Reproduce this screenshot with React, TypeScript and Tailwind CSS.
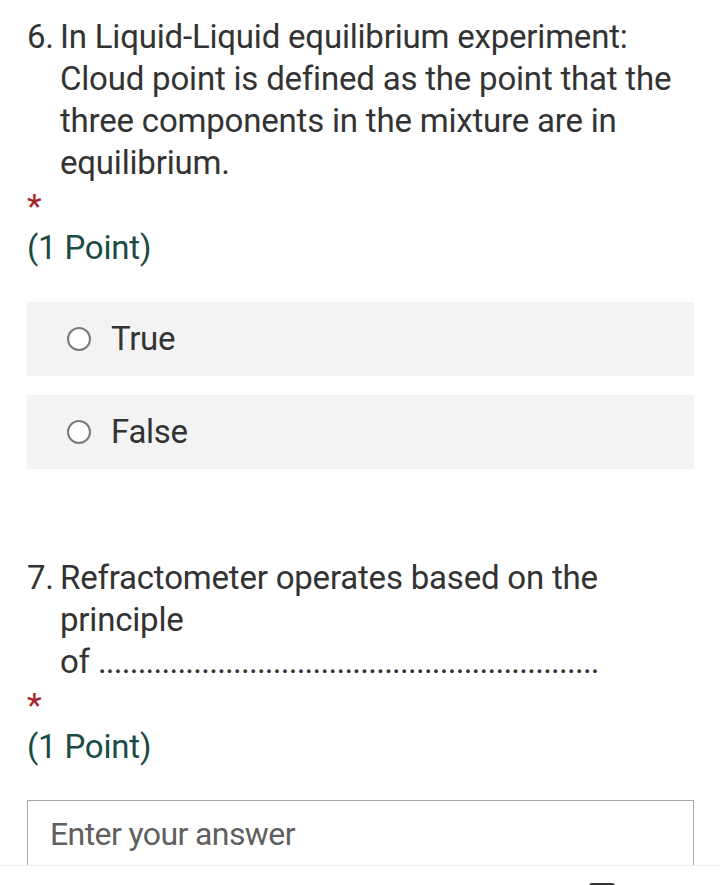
import React from "react";

function Radio() {
  return <span className="inline-block w-[24px] h-[24px] rounded-full border-[2px] border-[#7a7a7a] bg-white shrink-0" />;
}

function Option({ label }: { label: string }) {
  return (
    <div className="h-[74px] bg-[#f3f3f3] flex items-center pl-[40px] gap-[20px]">
      <Radio />
      <span className="text-[33px] leading-[42px] text-[#333333] tracking-[-0.3px]">{label}</span>
    </div>
  );
}

function Star() {
  return <div className="text-[#a4262c] text-[34px] leading-[32px] mt-[6px] h-[32px] -mb-[4px]">*</div>;
}

export default function App() {
  const dots = "...............................................................";
  return (
    <div className="w-[720px] h-[885px] bg-white overflow-hidden relative text-[#333333]" style={{ fontFamily: "Roboto, sans-serif" }}>
      <div className="pl-[27px] pr-[26px] tracking-[-0.2px]">
        <div className="pt-[16px] flex text-[33px] leading-[42px]">
          <span className="w-[33px] shrink-0">6.</span>
          <div className="whitespace-nowrap">
            <div>In Liquid-Liquid equilibrium experiment:</div>
            <div>Cloud point is defined as the point that the</div>
            <div>three components in the mixture are in</div>
            <div>equilibrium.</div>
          </div>
        </div>
        <Star />
        <div className="text-[#1a4b46] text-[33px] leading-[42px] mt-[9px]">(1 Point)</div>
        <div className="mt-[33px] flex flex-col gap-[19px]">
          <Option label="True" />
          <Option label="False" />
        </div>
        <div className="pt-[88px] flex text-[33px] leading-[42px]">
          <span className="w-[33px] shrink-0">7.</span>
          <div className="whitespace-nowrap">
            <div>Refractometer operates based on the</div>
            <div>principle</div>
            <div>
              of <span className="tracking-[-0.75px]">{dots}</span>
            </div>
          </div>
        </div>
        <Star />
        <div className="text-[#1a4b46] text-[33px] leading-[42px] mt-[9px]">(1 Point)</div>
        <div className="mt-[32px] h-[80px] border border-[#a8a8a8] border-b-0 pl-[22px] pt-[12px]">
          <span className="text-[32px] leading-[42px] text-[#5f5f5f] tracking-[-0.6px]">Enter your answer</span>
        </div>
      </div>
      <div className="absolute left-0 right-0 top-[865px] h-[20px] bg-white border-t border-[#ececec]">
        <div className="absolute left-[589px] top-[17px] w-[26px] h-[3px] bg-[#333] rounded-t" />
      </div>
    </div>
  );
}
